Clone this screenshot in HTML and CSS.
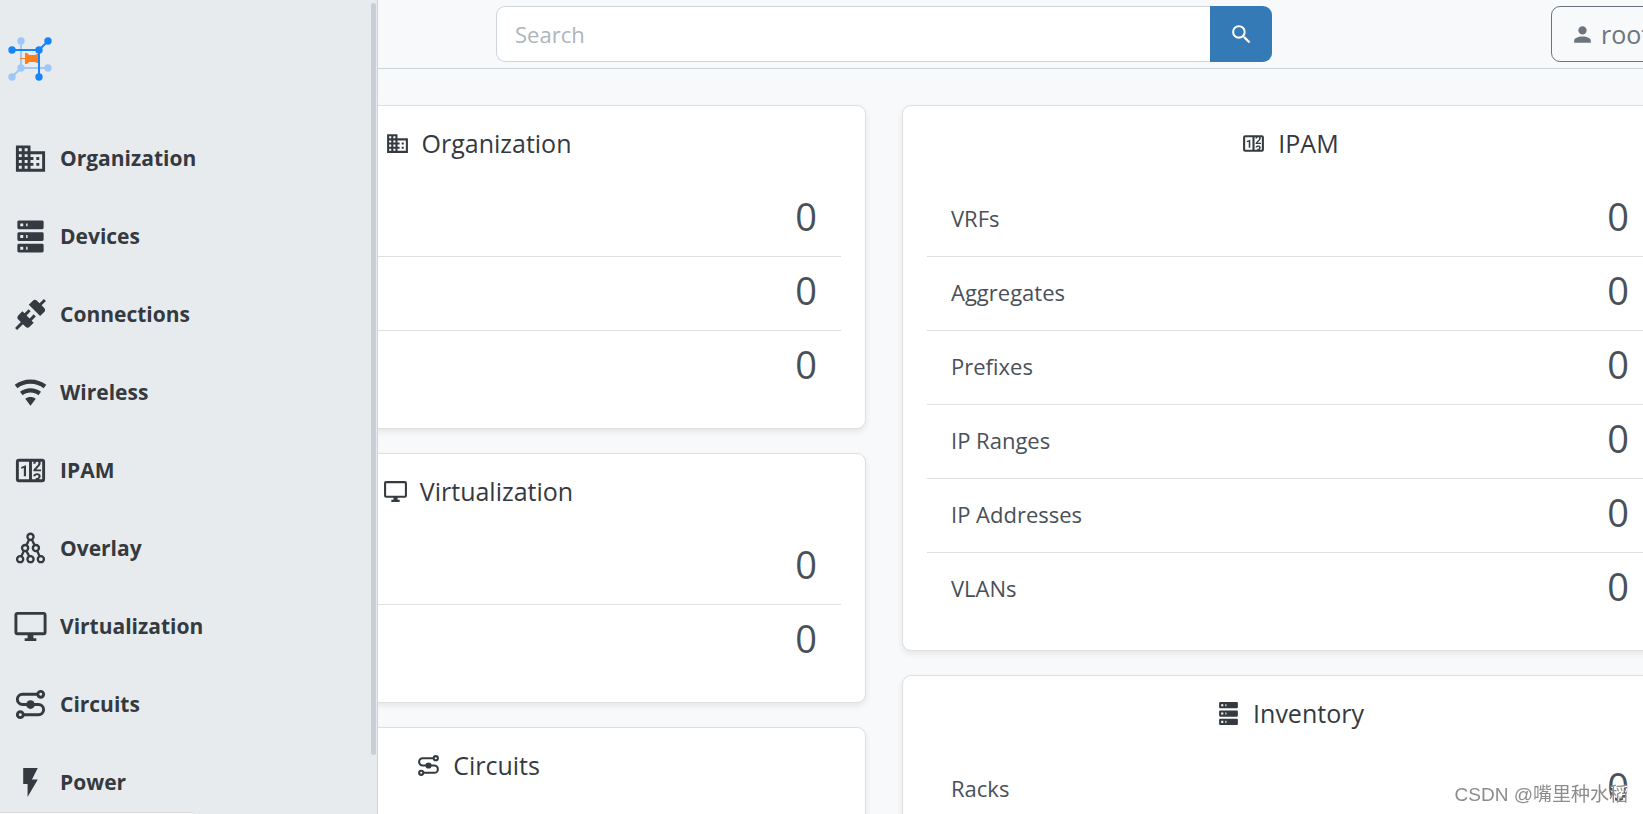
FILE: index.html
```html
<!DOCTYPE html>
<html lang="en">
<head>
    <meta charset="UTF-8">
    <meta name="viewport" content="width=device-width, initial-scale=1.0">
    <title>Home</title>
    <link rel="stylesheet" href="styles.css">
</head>
<body>

    <!-- Icon set -->
    <svg class="icon-set" aria-hidden="true">
        <symbol id="icon-domain" viewBox="0 0 24 24">
            <path d="M18,15H16V17H18M18,11H16V13H18M20,19H12V17H14V15H12V13H14V11H12V9H20M10,7H8V5H10M10,11H8V9H10M10,15H8V13H10M10,19H8V17H10M6,7H4V5H6M6,11H4V9H6M6,15H4V13H6M6,19H4V17H6M12,7V3H2V21H22V7H12Z"/>
        </symbol>
        <symbol id="icon-server" viewBox="0 0 24 24">
            <path d="M4,1H20A1,1 0 0,1 21,2V6A1,1 0 0,1 20,7H4A1,1 0 0,1 3,6V2A1,1 0 0,1 4,1M4,9H20A1,1 0 0,1 21,10V14A1,1 0 0,1 20,15H4A1,1 0 0,1 3,14V10A1,1 0 0,1 4,9M4,17H20A1,1 0 0,1 21,18V22A1,1 0 0,1 20,23H4A1,1 0 0,1 3,22V18A1,1 0 0,1 4,17M9,5H10V3H9V5M9,13H10V11H9V13M9,21H10V19H9V21M5,3V5H7V3H5M5,11V13H7V11H5M5,19V21H7V19H5Z"/>
        </symbol>
        <symbol id="icon-connection" viewBox="0 0 24 24">
            <path d="M21.4 7.5C22.2 8.3 22.2 9.6 21.4 10.3L18.6 13.1L10.8 5.3L13.6 2.5C14.4 1.7 15.7 1.7 16.4 2.5L18.2 4.3L21.2 1.3L22.6 2.7L19.6 5.7L21.4 7.5M15.6 13.3L14.2 11.9L11.4 14.7L9.3 12.6L12.1 9.8L10.7 8.4L7.9 11.2L6.4 9.8L3.6 12.6C2.8 13.4 2.8 14.7 3.6 15.4L5.4 17.2L1.4 21.2L2.8 22.6L6.8 18.6L8.6 20.4C9.4 21.2 10.7 21.2 11.4 20.4L14.2 17.6L12.8 16.2L15.6 13.3Z"/>
        </symbol>
        <symbol id="icon-wifi" viewBox="0 0 24 24">
            <path d="M12,21L15.6,16.2C14.6,15.45 13.35,15 12,15C10.65,15 9.4,15.45 8.4,16.2L12,21M12,3C7.95,3 4.21,4.34 1.2,6.6L3,9C5.5,7.12 8.62,6 12,6C15.38,6 18.5,7.12 21,9L22.8,6.6C19.79,4.34 16.05,3 12,3M12,9C9.3,9 6.81,9.89 4.8,11.4L6.6,13.8C8.1,12.67 9.97,12 12,12C14.03,12 15.9,12.67 17.4,13.8L19.2,11.4C17.19,9.89 14.7,9 12,9Z"/>
        </symbol>
        <symbol id="icon-counter" viewBox="0 0 24 24">
            <path d="M4,4H20A2,2 0 0,1 22,6V18A2,2 0 0,1 20,20H4A2,2 0 0,1 2,18V6A2,2 0 0,1 4,4M4,6V18H11V6H4M20,18V6H18.76C19,6.54 18.95,7.07 18.95,7.13C18.88,7.8 18.41,8.5 18.24,8.75L15.91,11.3L19.23,11.28L19.24,12.5L14.04,12.47L14,11.47C14,11.47 17.05,8.24 17.2,7.95C17.34,7.67 17.91,6 16.5,6C15.27,6.05 15.41,7.3 15.41,7.3L13.87,7.31C13.87,7.31 13.88,6.65 14.25,6H13V18H15.58L15.57,17.14L16.54,17.13C16.54,17.13 17.45,16.97 17.46,16.08C17.5,15.08 16.65,15.08 16.5,15.08C16.37,15.08 15.43,15.13 15.43,15.95H13.91C13.91,15.95 13.95,13.89 16.5,13.89C19.1,13.89 18.96,15.91 18.96,15.91C18.96,15.91 19,17.16 17.85,17.63L18.37,18H20M8.92,16H7.42V10.2L5.62,10.76V9.53L8.76,8.41H8.92V16Z"/>
        </symbol>
        <symbol id="icon-graph" viewBox="0 0 24 24">
            <g fill="none" stroke="currentColor" stroke-width="1.6">
                <circle cx="12" cy="4" r="2.1"/>
                <circle cx="8.300" cy="11.700" r="2.1"/>
                <circle cx="15.700" cy="11.700" r="2.1"/>
                <circle cx="4.900" cy="19.300" r="2.1"/>
                <circle cx="12" cy="19.300" r="2.1"/>
                <circle cx="19.100" cy="19.300" r="2.1"/>
                <path d="M11.1 5.900L9.200 9.800M12.900 5.900L14.800 9.800M7.500 13.600L5.700 17.400M9.100 13.600L11.200 17.400M16.500 13.600L18.300 17.400"/>
            </g>
        </symbol>
        <symbol id="icon-monitor" viewBox="0 0 24 24">
            <path d="M21,16H3V4H21M21,2H3C1.89,2 1,2.89 1,4V16A2,2 0 0,0 3,18H10V20H8V22H16V20H14V18H21A2,2 0 0,0 23,16V4C23,2.89 22.1,2 21,2Z"/>
        </symbol>
        <symbol id="icon-transit" viewBox="0 0 24 24">
            <g fill="none" stroke="currentColor" stroke-width="2">
                <circle cx="19" cy="5" r="2"/>
                <circle cx="5" cy="19" r="2"/>
                <path d="M17 5H6.500A3.500 3.500 0 0 0 6.500 12H17.500A3.500 3.500 0 0 1 17.500 19H7"/>
            </g>
            <circle cx="12" cy="12" r="3"/>
        </symbol>
        <symbol id="icon-flash" viewBox="0 0 24 24">
            <path d="M7,2V13H10V22L17,10H13L17,2H7Z"/>
        </symbol>
        <symbol id="icon-magnify" viewBox="0 0 24 24">
            <path d="M9.5,3A6.5,6.5 0 0,1 16,9.5C16,11.11 15.41,12.59 14.44,13.73L14.71,14H15.5L20.5,19L19,20.5L14,15.5V14.71L13.73,14.44C12.59,15.41 11.11,16 9.5,16A6.5,6.5 0 0,1 3,9.5A6.5,6.5 0 0,1 9.5,3M9.5,5C7,5 5,7 5,9.5C5,12 7,14 9.5,14C12,14 14,12 14,9.5C14,7 12,5 9.5,5Z"/>
        </symbol>
        <symbol id="icon-account" viewBox="0 0 24 24">
            <path d="M12,4A4,4 0 0,1 16,8A4,4 0 0,1 12,12A4,4 0 0,1 8,8A4,4 0 0,1 12,4M12,14C16.42,14 20,15.79 20,18V20H4V18C4,15.79 7.58,14 12,14Z"/>
        </symbol>
    </svg>

    <!-- Sidebar -->
    <nav class="sidebar">
        <a href="#" class="logo" aria-label="Home">
            <svg viewBox="0 0 44 44">
                <g stroke="#9dc8fa" fill="#9dc8fa" stroke-width="2">
                    <path d="M13 4V31H40M13 31L4 40" fill="none"/>
                    <circle cx="13" cy="4" r="2.700"/>
                    <circle cx="40" cy="31" r="2.700"/>
                    <circle cx="13" cy="31" r="2.700"/>
                    <circle cx="4" cy="40" r="2.700"/>
                </g>
                <path d="M12 21H17V16H19L21 18H27L29 17H31V26H29L27 25H21L19 27H17V22H12Z" fill="#ff7f1a"/>
                <g stroke="#1685fc" fill="#1685fc" stroke-width="2">
                    <path d="M4 13H31V40M31 13L40 4" fill="none"/>
                    <circle cx="4" cy="13" r="2.700"/>
                    <circle cx="31" cy="13" r="2.700"/>
                    <circle cx="40" cy="4" r="2.700"/>
                    <circle cx="31" cy="40" r="2.700"/>
                </g>
            </svg>
        </a>
        <ul class="menu">
            <li><a href="#"><svg><use href="#icon-domain"/></svg>Organization</a></li>
            <li><a href="#"><svg><use href="#icon-server"/></svg>Devices</a></li>
            <li><a href="#"><svg><use href="#icon-connection"/></svg>Connections</a></li>
            <li><a href="#"><svg><use href="#icon-wifi"/></svg>Wireless</a></li>
            <li><a href="#"><svg><use href="#icon-counter"/></svg>IPAM</a></li>
            <li><a href="#"><svg><use href="#icon-graph"/></svg>Overlay</a></li>
            <li><a href="#"><svg><use href="#icon-monitor"/></svg>Virtualization</a></li>
            <li><a href="#"><svg><use href="#icon-transit"/></svg>Circuits</a></li>
            <li><a href="#"><svg><use href="#icon-flash"/></svg>Power</a></li>
        </ul>
        <div class="scroll-thumb"></div>
    </nav>

    <!-- Page -->
    <div class="page">
        <header class="topbar">
            <form class="search">
                <input type="text" placeholder="Search" aria-label="Search">
                <button type="button" aria-label="Search"><svg><use href="#icon-magnify"/></svg></button>
            </form>
            <button type="button" class="user-btn"><svg><use href="#icon-account"/></svg>root</button>
        </header>

        <main class="board">
            <div class="column">
                <section class="card">
                    <h2><svg><use href="#icon-domain"/></svg>Organization</h2>
                    <ul class="stats">
                        <li><span class="count">0</span></li>
                        <li><span class="count">0</span></li>
                        <li><span class="count">0</span></li>
                    </ul>
                </section>
                <section class="card">
                    <h2><svg><use href="#icon-monitor"/></svg>Virtualization</h2>
                    <ul class="stats">
                        <li><span class="count">0</span></li>
                        <li><span class="count">0</span></li>
                    </ul>
                </section>
                <section class="card">
                    <h2><svg><use href="#icon-transit"/></svg>Circuits</h2>
                </section>
            </div>

            <div class="column">
                <section class="card">
                    <h2><svg><use href="#icon-counter"/></svg>IPAM</h2>
                    <ul class="stats">
                        <li><a href="#">VRFs</a><span class="count">0</span></li>
                        <li><a href="#">Aggregates</a><span class="count">0</span></li>
                        <li><a href="#">Prefixes</a><span class="count">0</span></li>
                        <li><a href="#">IP Ranges</a><span class="count">0</span></li>
                        <li><a href="#">IP Addresses</a><span class="count">0</span></li>
                        <li><a href="#">VLANs</a><span class="count">0</span></li>
                    </ul>
                </section>
                <section class="card">
                    <h2><svg><use href="#icon-server"/></svg>Inventory</h2>
                    <ul class="stats">
                        <li><a href="#">Racks</a><span class="count">0</span></li>
                    </ul>
                </section>
            </div>
        </main>
    </div>

    <div class="status-bar"></div>
    <div class="watermark">CSDN @嘴里种水稻</div>

</body>
</html>
```
FILE: styles.css
```css
/* Global Styles */
* {
    margin: 0;
    padding: 0;
    box-sizing: border-box;
}

body {
    height: 100vh;
    overflow: hidden;
    font-family: "Open Sans", sans-serif;
    font-size: 22px;
    color: #343a40;
    background-color: #f8f9fb;
}

a {
    color: inherit;
    text-decoration: none;
}

ul {
    list-style: none;
}

svg {
    display: block;
    flex: none;
    fill: currentColor;
}

.icon-set {
    display: none;
}

/* Sidebar */
.sidebar {
    position: fixed;
    top: 0;
    bottom: 0;
    left: 0;
    width: 378px;
    overflow: hidden;
    background-color: #e8ebee;
    border-right: 1px solid #cdd1d8;
    z-index: 10;
}

.logo {
    display: block;
    padding: 37px 8px 38px;
}

.logo svg {
    width: 44px;
    height: 44px;
}

.menu a {
    display: flex;
    align-items: center;
    gap: 12px;
    height: 78px;
    padding-left: 13px;
    font-size: 21px;
    font-weight: bold;
    color: #343a40;
}

.menu svg {
    width: 35px;
    height: 35px;
}

.scroll-thumb {
    position: absolute;
    top: 3px;
    right: 1px;
    width: 5px;
    bottom: 59px;
    border-radius: 3px;
    background-color: #c9ced6;
}

/* Page runs on under the open sidebar and past the right edge */
.page {
    margin-left: 54px;
    margin-right: -71px;
}

/* Top bar */
.topbar {
    display: grid;
    grid-template-columns: 1fr 2fr 1fr;
    padding: 6px 36px;
    border-bottom: 1px solid #cdd3dc;
}

.search {
    grid-column: 2;
    display: flex;
    margin: 0 9px;
}

.search input {
    flex: 1;
    min-width: 0;
    height: 56px;
    padding: 0 18px;
    font: inherit;
    color: #343a40;
    background-color: #fff;
    border: 1px solid #ced4da;
    border-right: none;
    border-radius: 9px 0 0 9px;
}

.search input::placeholder {
    color: #adb5bd;
    opacity: 1;
}

.search button {
    display: flex;
    align-items: center;
    justify-content: center;
    width: 62px;
    color: #fff;
    background-color: #337ab7;
    border: none;
    border-radius: 0 9px 9px 0;
    cursor: pointer;
}

.search svg,
.user-btn svg,
.card h2 svg {
    width: 25px;
    height: 25px;
}

.user-btn {
    justify-self: end;
    display: flex;
    align-items: center;
    gap: 6px;
    width: 127px;
    padding: 0 18px;
    font: inherit;
    font-size: 25px;
    color: #6c757d;
    background: none;
    border: 1px solid #6c757d;
    border-radius: 9px;
    cursor: pointer;
}

/* Cards */
.board {
    display: grid;
    grid-template-columns: 1fr 1fr;
    gap: 36px;
    min-height: 100vh;
    padding: 36px;
}

.column {
    display: flex;
    flex-direction: column;
    gap: 24px;
}

.card {
    padding: 24px;
    background-color: #fff;
    border: 1px solid #dfdfe0;
    border-radius: 9px;
    box-shadow: 0 3px 6px rgba(0, 0, 0, 0.08);
}

.card:last-child {
    flex: 1;
}

.card h2 {
    display: flex;
    align-items: center;
    justify-content: center;
    gap: 12px;
    height: 26px;
    margin-bottom: 27px;
    font-size: 25px;
    font-weight: normal;
}

.stats li {
    display: flex;
    align-items: center;
    justify-content: space-between;
    height: 74px;
    padding: 0 24px 4px;
    color: #495057;
    border-bottom: 1px solid #dfdfe0;
}

.stats li:last-child {
    height: 73px;
    border-bottom: none;
}

.count {
    margin-left: auto;
    padding-bottom: 4px;
    font-size: 38px;
    line-height: 1;
}

/* Overlays */
.status-bar {
    position: fixed;
    left: 0;
    bottom: 0;
    width: 193px;
    height: 2px;
    background-color: #f8f8f8;
    border-top: 1px solid #dcdcdc;
    z-index: 20;
}

.watermark {
    position: fixed;
    right: 15px;
    bottom: 6px;
    font-family: "Liberation Sans", "Noto Sans CJK SC", sans-serif;
    font-size: 19px;
    line-height: 26px;
    color: #8c8c8c;
    text-shadow: 1px 1px 0 #fff;
    z-index: 20;
}
```
